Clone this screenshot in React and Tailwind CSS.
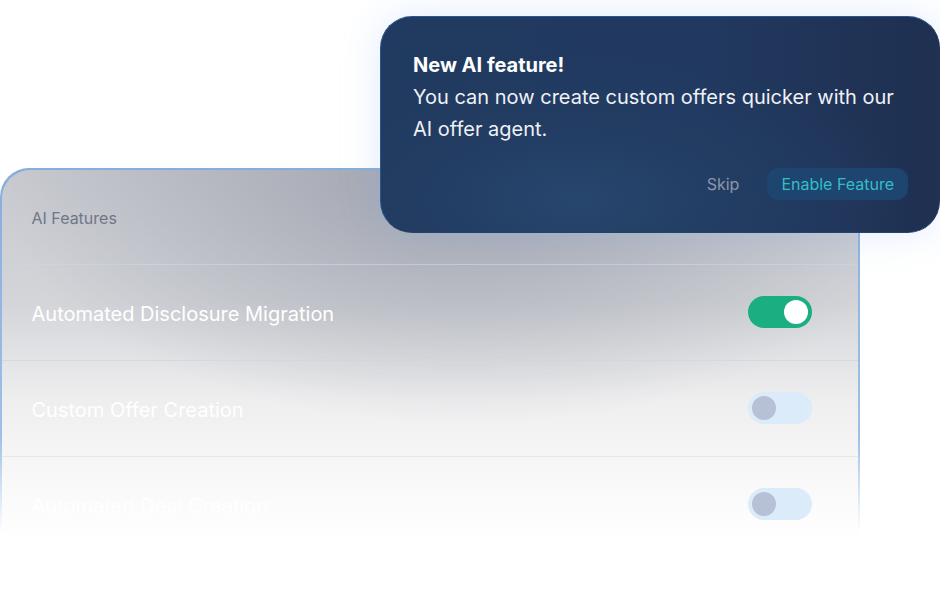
import React from "react";

function Toggle({ on }) {
  return on ? (
    <div className="w-16 h-8 rounded-full bg-[#1aae80] flex items-center justify-end px-1">
      <div className="w-6 h-6 rounded-full bg-white" />
    </div>
  ) : (
    <div className="w-16 h-8 rounded-full bg-[#dcebf9] flex items-center justify-start px-1">
      <div className="w-6 h-6 rounded-full bg-[#b6c1d6]" />
    </div>
  );
}

function Row({ label, on, line = "border-[#c9d7e6]/70" }) {
  return (
    <div className={"h-[96px] flex items-center justify-between pl-[30px] pr-[46px] border-t " + line}>
      <span className="text-[20px] leading-8 pt-[3px] text-white">{label}</span>
      <Toggle on={on} />
    </div>
  );
}

export default function App() {
  return (
    <div
      className="relative w-[940px] h-[616px] bg-white overflow-hidden"
      style={{ fontFamily: "Inter, 'Noto Sans', sans-serif" }}
    >
      <div className="pt-[168px] w-[860px]">
        <div className="rounded-tl-[29px] pt-[1.5px] pl-[1.5px] pr-[2px] [background-image:linear-gradient(to_bottom,#86aedb_0%,#9dc1e6_70%,rgba(190,215,240,0)_95%)]">
          <div className="rounded-tl-[28px] [background-image:radial-gradient(ellipse_55%_62%_at_54%_4%,rgba(125,130,146,0.55),rgba(125,130,146,0)_100%),linear-gradient(to_bottom,#c8cad0_0%,#d3d5d9_35%,#eeeeef_60%,#f8f8f8_80%,#ffffff_97%)]">
            <div className="h-[94px] flex items-center pl-[30px] pt-[3px]">
              <span className="text-[16px] text-[#6f7786]">AI Features</span>
            </div>
            <Row label="Automated Disclosure Migration" on />
            <Row label="Custom Offer Creation" />
            <Row label="Automated Deal Creation" line="border-[#dbe6f1]/80" />
          </div>
        </div>
      </div>

      <div className="absolute left-[380px] top-[16px] w-[560px] rounded-[32px] border border-[#2a5590] border-b-[#23426c] border-r-[#213659] [background-image:radial-gradient(ellipse_60%_70%_at_35%_85%,#27466e_0%,#223c62_50%,rgba(34,60,98,0)_100%),linear-gradient(to_right,#213a5f_0%,#213961_55%,#1f3050_100%)] shadow-[0_0_40px_rgba(120,170,240,0.22)] pl-8 pr-[31px] pt-8 pb-8">
        <div className="text-[20px] leading-8 font-bold text-white">New AI feature!</div>
        <div className="text-[20px] leading-8 text-[#eef1f6]">
          You can now create custom offers quicker with our
          <br />
          AI offer agent.
        </div>
        <div className="mt-[23px] flex justify-end items-center gap-3">
          <button className="h-8 px-4 text-[16px] text-[#8b96a9]">Skip</button>
          <button className="h-8 px-[14px] rounded-xl bg-[#1e4470] text-[16px] text-[#33bec6]">
            Enable Feature
          </button>
        </div>
      </div>
    </div>
  );
}
